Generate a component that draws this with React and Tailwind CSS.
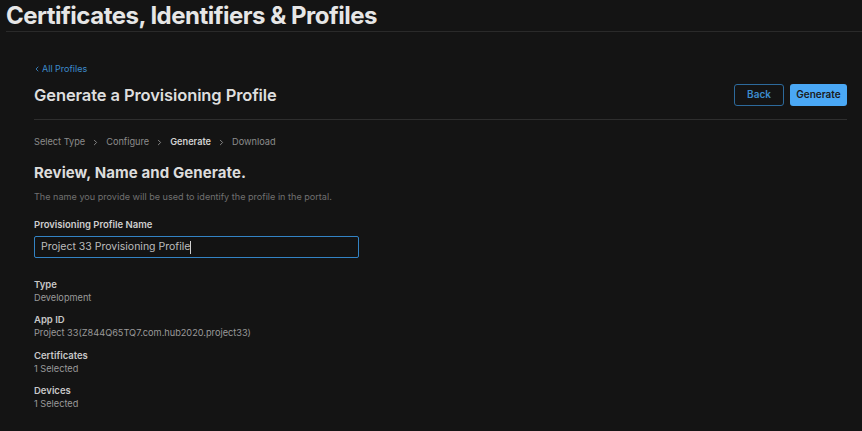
import { ChevronLeft, ChevronRight } from 'lucide-react';

const details = [
  { label: 'Type', value: 'Development' },
  { label: 'App ID', value: 'Project 33(Z844Q65TQ7.com.hub2020.project33)' },
  { label: 'Certificates', value: '1 Selected' },
  { label: 'Devices', value: '1 Selected' },
];

const steps = ['Select Type', 'Configure', 'Generate', 'Download'];

export default function App() {
  return (
    <div className="w-[862px] h-[431px] overflow-hidden bg-[#141414] font-['Inter',sans-serif]">
      {/* Page title */}
      <div className="ml-[6px] h-[32px] border-b border-[#2a2a2a]">
        <h1 className="pt-[2px] text-[24px] leading-[28px] font-bold tracking-[-0.5px] text-[#e6e6e6]">
          Certificates, Identifiers &amp; Profiles
        </h1>
      </div>

      <div className="pl-[34px] pr-[15px]">
        <a className="mt-[31px] flex items-center gap-[1px] text-[9px] leading-[12px] text-[#3d8bcc]">
          <ChevronLeft size={8} strokeWidth={2.5} className="-ml-[1px]" />
          All Profiles
        </a>

        <div className="mt-[7px] pb-[13px] flex items-center justify-between border-b border-[#2e2e2e]">
          <h2 className="pt-[2px] text-[16.5px] leading-[22px] font-semibold tracking-[-0.1px] text-[#dedede]">
            Generate a Provisioning Profile
          </h2>
          <div className="flex items-center gap-[6px] pt-[1px]">
            <button className="w-[50px] h-[22px] rounded-[3px] border border-[#2d6a9c] text-[10px] font-semibold text-[#3d8bcc]">
              Back
            </button>
            <button className="w-[57px] h-[22px] rounded-[3px] bg-[#4aa8f5] text-[10px] font-semibold text-[#1a1a1a]">
              Generate
            </button>
          </div>
        </div>

        {/* Steps */}
        <div className="mt-[16px] flex items-center text-[9.2px] leading-[12px] text-[#8c8c8c]">
          {steps.map((s, i) => (
            <div key={s} className="flex items-center">
              <span className={s === 'Generate' ? 'font-semibold text-[#d0d0d0]' : ''}>{s}</span>
              {i < steps.length - 1 && <ChevronRight size={9} strokeWidth={2.5} className="mx-[6px] text-[#8c8c8c]" />}
            </div>
          ))}
        </div>

        <h3 className="mt-[15px] text-[15px] leading-[20px] font-bold tracking-[0.1px] text-[#dcdcdc]">
          Review, Name and Generate.
        </h3>
        <p className="mt-[8px] text-[9.1px] leading-[12px] text-[#707070]">
          The name you provide will be used to identify the profile in the portal.
        </p>

        <label className="block mt-[16px] text-[9.5px] leading-[12px] font-semibold text-[#cfcfcf]">
          Provisioning Profile Name
        </label>
        <div className="mt-[5px] w-[325px] h-[22px] rounded-[2px] border-[1.5px] border-[#3383c4] bg-[#131313] flex items-center px-[6px] text-[10.5px] text-[#bdbdbd]">
          Project 33 Provisioning Profile<span className="w-px h-[13px] bg-[#d0d0d0]" />
        </div>

        <div className="mt-[20px] flex flex-col gap-[9.3px]">
          {details.map((d) => (
            <div key={d.label}>
              <div className="text-[9.5px] leading-[13px] font-semibold text-[#c8c8c8]">{d.label}</div>
              <div className="text-[9.2px] leading-[13px] text-[#9a9a9a]">{d.value}</div>
            </div>
          ))}
        </div>
      </div>
    </div>
  );
}
